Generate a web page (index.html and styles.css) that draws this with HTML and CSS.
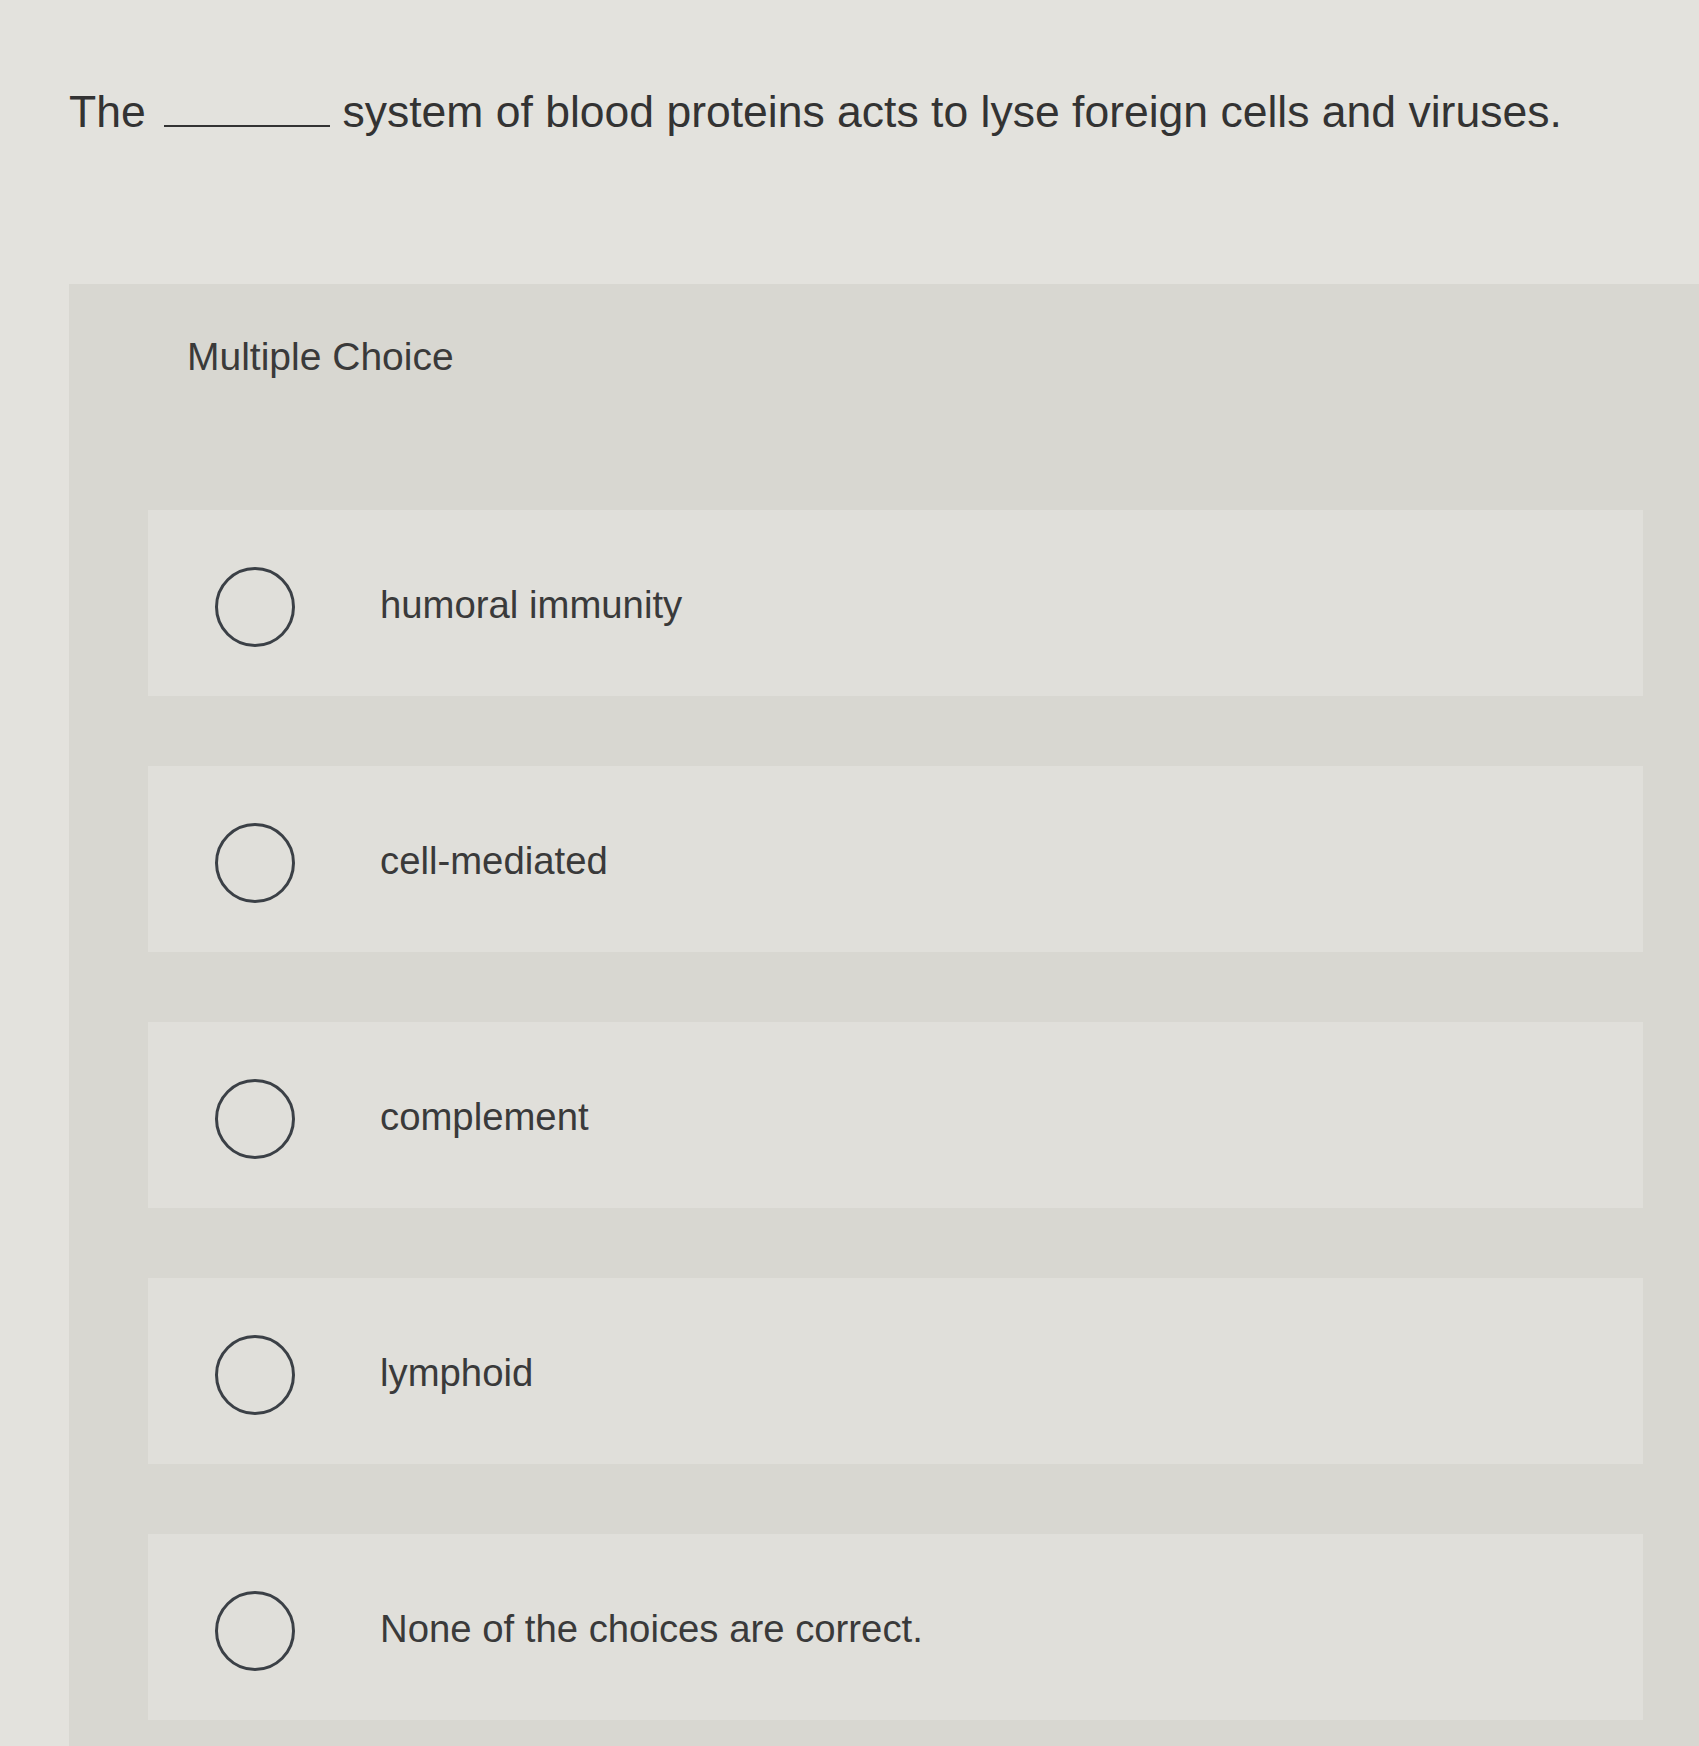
FILE: index.html
```html
<!DOCTYPE html>
<html lang="en">
<head>
<meta charset="utf-8">
<title>Multiple Choice</title>
<link rel="stylesheet" href="styles.css">
</head>
<body>
  <p class="question">The <span class="blank"></span> system of blood proteins acts to lyse foreign cells and viruses.</p>
  <section class="panel">
    <h2 class="panel-title">Multiple Choice</h2>
    <ul class="choices">
      <li class="choice"><span class="radio"></span><span class="label">humoral immunity</span></li>
      <li class="choice"><span class="radio"></span><span class="label">cell-mediated</span></li>
      <li class="choice"><span class="radio"></span><span class="label">complement</span></li>
      <li class="choice"><span class="radio"></span><span class="label">lymphoid</span></li>
      <li class="choice"><span class="radio"></span><span class="label">None of the choices are correct.</span></li>
    </ul>
  </section>
</body>
</html>
```

FILE: styles.css
```css
html, body {
  margin: 0;
  padding: 0;
}
body {
  background: #e3e2dd;
  font-family: "Liberation Sans", Arial, sans-serif;
  color: #353535;
  height: 1746px;
  overflow: hidden;
}
.question {
  margin: 86px 0 0 69px;
  font-size: 44.5px;
  line-height: 52px;
  color: #333;
  white-space: nowrap;
}
.blank {
  display: inline-block;
  width: 166px;
  margin-left: 6px;
  border-bottom: 2px solid #333;
  vertical-align: baseline;
}
.panel {
  margin: 146px 0 0 69px;
  background: #d8d7d1;
  padding: 51px 56px 60px 0;
}
.panel-title {
  margin: 0 0 131px 118px;
  font-size: 39px;
  line-height: 44px;
  font-weight: normal;
  color: #3a3a3a;
}
.choices {
  list-style: none;
  margin: 0 0 0 79px;
  padding: 0;
  display: flex;
  flex-direction: column;
  gap: 70px;
}
.choice {
  height: 186px;
  background: #e0dfda;
  display: flex;
  align-items: center;
  padding-left: 67px;
}
.radio {
  width: 74px;
  height: 74px;
  border: 3px solid #3b4046;
  border-radius: 50%;
  flex: none;
  margin-top: 8px;
}
.label {
  margin-left: 85px;
  margin-top: 4px;
  font-size: 38.3px;
  color: #3a3a3a;
}
```
